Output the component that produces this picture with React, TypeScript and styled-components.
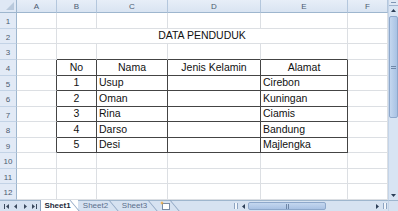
import React from 'react';
import styled, { createGlobalStyle } from 'styled-components';

const GlobalStyle = createGlobalStyle`
  html, body { margin: 0; padding: 0; background: #fff; overflow: hidden; }
  * { box-sizing: border-box; }
`;

const COLS = ['A', 'B', 'C', 'D', 'E', 'F'];
const COL_W = [17, 40, 40, 71, 93, 87, 40];
const ROW_H = [16, 15, 16, 16, 15, 16, 15, 16, 15, 16, 15, 16];

type Align = 'left' | 'center';
const data: Record<number, { text: string; align: Align }[]> = {
  4: [
    { text: 'No', align: 'center' },
    { text: 'Nama', align: 'center' },
    { text: 'Jenis Kelamin', align: 'center' },
    { text: 'Alamat', align: 'center' },
  ],
};
const people = [
  ['1', 'Usup', 'Cirebon'],
  ['2', 'Oman', 'Kuningan'],
  ['3', 'Rina', 'Ciamis'],
  ['4', 'Darso', 'Bandung'],
  ['5', 'Desi', 'Majlengka'],
];
people.forEach((p, i) => {
  data[5 + i] = [
    { text: p[0], align: 'center' },
    { text: p[1], align: 'left' },
    { text: '', align: 'left' },
    { text: p[2], align: 'left' },
  ];
});

const App = () => {
  const cells: React.ReactNode[] = [];
  cells.push(<Corner key="corner" />);
  COLS.forEach((c) => cells.push(<ColHead key={c}>{c}</ColHead>));
  ROW_H.forEach((_, i) => {
    const r = i + 1;
    cells.push(<RowHead key={`h${r}`}>{r}</RowHead>);
    if (r === 2) {
      cells.push(<Cell key="a2" />);
      cells.push(
        <Cell key="title" $align="center" $span={4}>
          DATA PENDUDUK
        </Cell>
      );
      cells.push(<Cell key="f2" />);
      return;
    }
    COLS.forEach((c, ci) => {
      const col = ci + 1;
      const inTable = r >= 4 && r <= 9;
      const darkRight = inTable && col >= 1 && col <= 5;
      const darkBottom = r >= 3 && r <= 9 && col >= 2 && col <= 5;
      const content = data[r] && col >= 2 && col <= 5 ? data[r][col - 2] : undefined;
      cells.push(
        <Cell key={`${c}${r}`} $r={darkRight} $b={darkBottom} $align={content?.align}>
          {content?.text}
        </Cell>
      );
    });
  });

  return (
    <>
      <GlobalStyle />
      <Window>
        <Sheet>{cells}</Sheet>
        <VScroll>
          <SplitBox />
          <VArrow>
            <svg width="5" height="3" viewBox="0 0 5 3"><polygon points="0,3 5,3 2.5,0" fill="#2c3e57" /></svg>
          </VArrow>
          <VThumb><Grip $v /></VThumb>
          <VTrack />
          <VArrow>
            <svg width="5" height="3" viewBox="0 0 5 3"><polygon points="0,0 5,0 2.5,3" fill="#2c3e57" /></svg>
          </VArrow>
        </VScroll>
        <BottomBar>
          <NavButtons>
            <NavIcon><svg width="6" height="5" viewBox="0 0 6 5"><rect x="0" y="0" width="1" height="5" fill="#3b4a5e" /><polygon points="5,0 5,5 2,2.5" fill="#3b4a5e" /></svg></NavIcon>
            <NavIcon><svg width="4" height="5" viewBox="0 0 4 5"><polygon points="3,0 3,5 0,2.5" fill="#3b4a5e" /></svg></NavIcon>
            <NavIcon><svg width="4" height="5" viewBox="0 0 4 5"><polygon points="0,0 0,5 3,2.5" fill="#3b4a5e" /></svg></NavIcon>
            <NavIcon><svg width="6" height="5" viewBox="0 0 6 5"><polygon points="0,0 0,5 3,2.5" fill="#3b4a5e" /><rect x="4" y="0" width="1" height="5" fill="#3b4a5e" /></svg></NavIcon>
          </NavButtons>
          <Tabs>
            <Tab $active>Sheet1</Tab>
            <Tab>Sheet2</Tab>
            <Tab>Sheet3</Tab>
            <Tab $icon>
              <svg width="10" height="9" viewBox="0 0 10 9">
                <rect x="2.5" y="2.5" width="7" height="6" fill="#fff" stroke="#7a8ca5" />
                <path d="M2 0 L2.6 1.4 L4 2 L2.6 2.6 L2 4 L1.4 2.6 L0 2 L1.4 1.4 Z" fill="#f0a630" />
              </svg>
            </Tab>
          </Tabs>
          <HScroll>
            <HSplit />
            <HArrow>
              <svg width="3" height="5" viewBox="0 0 3 5"><polygon points="3,0 3,5 0,2.5" fill="#2c3e57" /></svg>
            </HArrow>
            <HThumb><Grip /></HThumb>
            <HTrack />
            <HArrow>
              <svg width="3" height="5" viewBox="0 0 3 5"><polygon points="0,0 0,5 3,2.5" fill="#2c3e57" /></svg>
            </HArrow>
            <HSplit />
          </HScroll>
        </BottomBar>
        <ScrollCorner />
      </Window>
    </>
  );
};

export default App;

const Window = styled.div`
  width: 398px;
  height: 211px;
  display: grid;
  grid-template-columns: 388px 10px;
  grid-template-rows: 200px 11px;
  font-family: 'Liberation Sans', Arial, sans-serif;
  background: #fff;
`;

const Sheet = styled.div`
  display: grid;
  grid-template-columns: ${COL_W.map((w) => `${w}px`).join(' ')};
  grid-template-rows: 13px ${ROW_H.map((h) => `${h}px`).join(' ')};
  overflow: hidden;
`;

const headBase = `
  display: flex;
  align-items: center;
  justify-content: center;
  font-size: 8px;
  color: #4b5b70;
  border-right: 1px solid #9eb6ce;
  border-bottom: 1px solid #9eb6ce;
`;

const Corner = styled.div`
  ${headBase};
  background: #dfe8f5;
  position: relative;
  &::after {
    content: '';
    position: absolute;
    right: 2px;
    bottom: 2px;
    border-style: solid;
    border-width: 0 0 8px 8px;
    border-color: transparent transparent #b9c9dc transparent;
  }
`;

const ColHead = styled.div`
  ${headBase};
  background: linear-gradient(#e7eef8, #d9e4f2);
  border-right-color: #b4c7dd;
  border-bottom-color: #9eb6ce;
  padding-top: 1px;
`;

const RowHead = styled.div`
  ${headBase};
  background: #e2eaf6;
  border-bottom-color: #c3d3e6;
  padding-top: 2px;
`;

const Cell = styled.div<{ $r?: boolean; $b?: boolean; $align?: 'left' | 'center'; $span?: number }>`
  grid-column: ${(p) => (p.$span ? `span ${p.$span}` : 'auto')};
  display: flex;
  align-items: flex-end;
  justify-content: ${(p) => (p.$align === 'center' ? 'center' : 'flex-start')};
  padding: 0 2px 1px;
  font-size: 10.5px;
  line-height: 13px;
  color: #111;
  white-space: nowrap;
  border-right: 1px solid ${(p) => (p.$r ? '#444' : '#dcdfe3')};
  border-bottom: 1px solid ${(p) => (p.$b ? '#444' : '#dcdfe3')};
`;

const VScroll = styled.div`
  display: flex;
  flex-direction: column;
  background: #d8e4f3;
  border-left: 1px solid #c4d4e8;
`;

const SplitBox = styled.div`
  height: 6px;
  background: #dfe8f4;
  border-bottom: 1px solid #9eb3cf;
  position: relative;
  &::after {
    content: '';
    position: absolute;
    left: 2px;
    right: 2px;
    top: 2px;
    height: 1px;
    background: #7f95b3;
  }
`;

const VArrow = styled.div`
  height: 9px;
  display: flex;
  align-items: center;
  justify-content: center;
`;

const VThumb = styled.div`
  height: 102px;
  margin: 1px 0 0;
  background: linear-gradient(90deg, #c4d7ef, #a9c2e4);
  border: 1px solid #8ea8cb;
  border-radius: 2px;
  display: flex;
  align-items: center;
  justify-content: center;
`;

const VTrack = styled.div`
  flex: 1;
`;

const Grip = styled.div<{ $v?: boolean }>`
  width: ${(p) => (p.$v ? '5px' : '3px')};
  height: ${(p) => (p.$v ? '3px' : '5px')};
  border-top: ${(p) => (p.$v ? '1px solid #6f87a8' : 'none')};
  border-bottom: ${(p) => (p.$v ? '1px solid #6f87a8' : 'none')};
  border-left: ${(p) => (p.$v ? 'none' : '1px solid #6f87a8')};
  border-right: ${(p) => (p.$v ? 'none' : '1px solid #6f87a8')};
`;

const BottomBar = styled.div`
  display: flex;
  align-items: stretch;
  background: #d6e2f1;
  border-top: 1px solid #9eb6ce;
`;

const NavButtons = styled.div`
  width: 40px;
  display: flex;
  align-items: center;
  padding-left: 2px;
`;

const NavIcon = styled.div`
  width: 9.5px;
  display: flex;
  align-items: center;
  justify-content: center;
`;

const Tabs = styled.div`
  display: flex;
  align-items: stretch;
  width: 193px;
`;

const Tab = styled.div<{ $active?: boolean; $icon?: boolean }>`
  position: relative;
  width: ${(p) => (p.$icon ? '22px' : p.$active ? '38px' : '39px')};
  margin-top: -1px;
  display: flex;
  align-items: center;
  justify-content: center;
  font-size: 8px;
  font-weight: ${(p) => (p.$active ? 700 : 400)};
  color: ${(p) => (p.$active ? '#1e2a3a' : '#5a6f8c')};
  background: ${(p) => (p.$active ? '#fff' : 'transparent')};
  border-left: ${(p) => (p.$active ? '1px solid #8da4c2' : 'none')};
  padding-right: 4px;
  &::after {
    content: '';
    position: absolute;
    right: 3px;
    top: 0;
    bottom: 0;
    width: 1px;
    background: #8da4c2;
    transform: skewX(40deg);
  }
`;

const HScroll = styled.div`
  flex: 1;
  display: flex;
  align-items: stretch;
  padding: 1px 0;
`;

const HSplit = styled.div`
  width: 4px;
  margin: 1px 1px;
  border-left: 1px solid #8da4c2;
  border-right: 1px solid #8da4c2;
  background: #f2f6fb;
`;

const HArrow = styled.div`
  width: 9px;
  display: flex;
  align-items: center;
  justify-content: center;
`;

const HThumb = styled.div`
  width: 78px;
  background: linear-gradient(#c4d7ef, #a9c2e4);
  border: 1px solid #8ea8cb;
  border-radius: 2px;
  display: flex;
  align-items: center;
  justify-content: center;
`;

const HTrack = styled.div`
  flex: 1;
`;

const ScrollCorner = styled.div`
  background: #d6e2f1;
  border-top: 1px solid #9eb6ce;
  border-left: 1px solid #c4d4e8;
`;
